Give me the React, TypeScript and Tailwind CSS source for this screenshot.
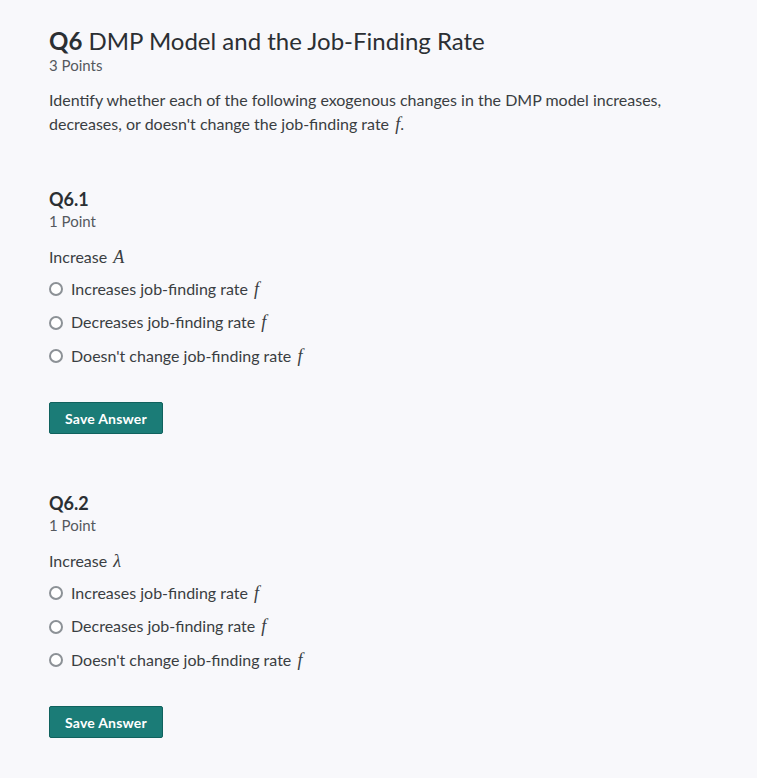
import React from 'react';

const sans = "font-['Lato','Open_Sans',sans-serif]";

function M({ children }: { children: React.ReactNode }): React.ReactElement {
  return <span className="ml-[2px] font-['Liberation_Serif',serif] text-[18px] italic">{children}</span>;
}

const options = ['Increases job-finding rate', 'Decreases job-finding rate', "Doesn't change job-finding rate"];

function SubQuestion({ num, variable, first }: { num: string; variable: string; first?: boolean }): React.ReactElement {
  return (
    <div className={first ? 'mt-[51px]' : 'mt-[57px]'}>
      <h2 className="text-[18px] font-bold leading-[24px] text-[#2b2f33]">{num}</h2>
      <p className="text-[15px] leading-[20px] text-[#55595e]">1 Point</p>
      <p className="mt-[15px] text-[16px] leading-[22px] text-[#3a3e42]">
        Increase <M>{variable}</M>
      </p>
      <div className="mt-[10px] flex flex-col gap-[11.5px]">
        {options.map((o) => (
          <label key={o} className="flex h-[22px] items-center gap-[8px] text-[16px] text-[#3a3e42]">
            <span className="h-[14px] w-[14px] rounded-full border-2 border-[#8c9196] bg-white" />
            <span>
              {o} <M>f</M>
            </span>
          </label>
        ))}
      </div>
      <button className="mt-[35px] h-[32px] w-[114px] rounded-[2px] border border-[#10625e] bg-[#1b7c77] text-[14px] font-bold tracking-[0.2px] text-white">
        Save Answer
      </button>
    </div>
  );
}

export default function App(): React.ReactElement {
  return (
    <div className={`min-h-screen bg-[#f8f8fb] px-[49px] pt-[27px] pb-[40px] ${sans}`}>
      <h1 className="text-[24px] leading-[28px] text-[#2b2f33]">
        <span className="font-bold">Q6</span> DMP Model and the Job-Finding Rate
      </h1>
      <p className="text-[15px] leading-[20px] text-[#55595e]">3 Points</p>
      <p className="mt-[13px] text-[16px] leading-[24px] text-[#3a3e42]">
        Identify whether each of the following exogenous changes in the DMP model increases,
        <br />
        decreases, or doesn't change the job-finding rate <M>f</M>.
      </p>
      <SubQuestion num="Q6.1" variable="A" first />
      <SubQuestion num="Q6.2" variable="λ" />
    </div>
  );
}
